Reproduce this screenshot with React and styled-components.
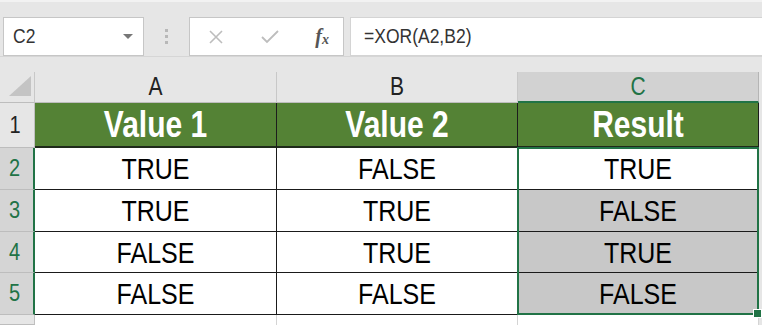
import React from 'react';
import styled, { createGlobalStyle } from 'styled-components';

const GlobalStyle = createGlobalStyle`
  body {
    margin: 0;
    background: #fff;
    font-family: "Liberation Sans", Arial, sans-serif;
  }
`;

const rows = [
  ['TRUE', 'FALSE', 'TRUE'],
  ['TRUE', 'TRUE', 'FALSE'],
  ['FALSE', 'TRUE', 'TRUE'],
  ['FALSE', 'FALSE', 'FALSE'],
];

const rowHeights = [42, 42, 41, 42];

function App() {
  return (
    <>
      <GlobalStyle />
      <Window>
        <TopStrip />
        <FormulaBar>
          <NameBox>
            <NameText>C2</NameText>
            <DropArrow />
          </NameBox>
          <Grip>
            <i /><i /><i />
          </Grip>
          <ButtonsBox>
            <svg width="16" height="16" viewBox="0 0 16 16">
              <path d="M2 2 L14 14 M14 2 L2 14" stroke="#bdbdbd" strokeWidth="1.6" fill="none" />
            </svg>
            <svg width="20" height="16" viewBox="0 0 20 16">
              <path d="M2 8 L7 13 L18 2" stroke="#bdbdbd" strokeWidth="1.8" fill="none" />
            </svg>
            <Fx>f<sub>x</sub></Fx>
          </ButtonsBox>
          <FormulaInput>
            <FormulaText>=XOR(A2,B2)</FormulaText>
          </FormulaInput>
        </FormulaBar>
        <Spacer />
        <SheetWrap>
          <Sheet>
            <Corner>
              <svg width="22" height="20" viewBox="0 0 22 20">
                <path d="M22 0 L22 20 L0 20 Z" fill="#c4c4c4" />
              </svg>
            </Corner>
            <ColHeader>
              <Stretch>A</Stretch>
            </ColHeader>
            <ColHeader>
              <Stretch>B</Stretch>
            </ColHeader>
            <ColHeader selected>
              <Stretch>C</Stretch>
            </ColHeader>

            <RowHeader $h={45}>
              <Stretch>1</Stretch>
            </RowHeader>
            <HeadCell>
              <Stretch>Value 1</Stretch>
            </HeadCell>
            <HeadCell>
              <Stretch>Value 2</Stretch>
            </HeadCell>
            <HeadCell>
              <Stretch>Result</Stretch>
            </HeadCell>

            {rows.map((row, idx) => (
              <React.Fragment key={idx}>
                <RowHeader $h={rowHeights[idx]} selected>
                  <Stretch>{idx + 2}</Stretch>
                </RowHeader>
                {row.map((val, c) => (
                  <Cell key={c} shaded={c === 2 && idx > 0}>
                    <Stretch>{val}</Stretch>
                  </Cell>
                ))}
              </React.Fragment>
            ))}

            <RowHeader $h={10} />
            <EmptyCell />
            <EmptyCell />
            <EmptyCell />
          </Sheet>
          <Selection>
            <Handle />
          </Selection>
        </SheetWrap>
      </Window>
    </>
  );
}

export default App;

const Window = styled.div`
  width: 762px;
  height: 325px;
  background: #e6e6e6;
  overflow: hidden;
`;

const TopStrip = styled.div`
  height: 15px;
  border-top: 2px solid #f2f2f2;
`;

const FormulaBar = styled.div`
  display: flex;
  align-items: stretch;
  height: 39px;
  padding-left: 3px;
`;

const NameBox = styled.div`
  width: 141px;
  display: flex;
  align-items: center;
  justify-content: space-between;
  background: #fff;
  border: 1px solid #c6c6c6;
  padding: 0 8px 0 8px;
  box-sizing: border-box;
`;

const NameText = styled.span`
  display: inline-block;
  font-size: 17.5px;
  color: #333;
  transform: scaleY(1.15);
  margin-left: 1px;
`;

const DropArrow = styled.span`
  width: 0;
  height: 0;
  border-left: 5px solid transparent;
  border-right: 5px solid transparent;
  border-top: 5px solid #777;
  margin-right: 2px;
`;

const Grip = styled.div`
  width: 45px;
  display: flex;
  flex-direction: column;
  align-items: center;
  justify-content: center;
  gap: 3px;
  i {
    display: block;
    width: 3px;
    height: 3px;
    background: #b8b8b8;
  }
`;

const ButtonsBox = styled.div`
  width: 155px;
  box-sizing: border-box;
  display: flex;
  align-items: center;
  justify-content: space-between;
  background: #fff;
  border: 1px solid #c6c6c6;
  padding: 0 14px 0 18px;
`;

const Fx = styled.span`
  font-family: "Liberation Serif", "Times New Roman", serif;
  font-style: italic;
  font-weight: bold;
  font-size: 20px;
  color: #555;
  sub {
    font-size: 14px;
    vertical-align: -1px;
  }
`;

const FormulaInput = styled.div`
  flex: 1;
  margin-left: 6px;
  display: flex;
  align-items: center;
  background: #fff;
  border: 1px solid #d4d4d4;
  border-right: none;
  padding-left: 13px;
`;

const FormulaText = styled.span`
  display: inline-block;
  font-size: 17.5px;
  color: #333;
  transform: scaleY(1.15);
`;

const Spacer = styled.div`
  height: 16px;
  border-top: 1px solid #d6d6d6;
  box-sizing: border-box;
`;

const SheetWrap = styled.div`
  position: relative;
  width: 759px;
`;

const Sheet = styled.div`
  display: grid;
  grid-template-columns: 35px 242px 241px 241px;
  grid-template-rows: 31px 45px 42px 42px 41px 42px 10px;
`;

const Stretch = styled.span`
  display: inline-block;
  transform: scaleY(1.2);
`;

const Corner = styled.div`
  display: flex;
  align-items: flex-end;
  justify-content: flex-end;
  padding: 0 3px 6px 0;
  border-right: 1px solid #c8c8c8;
  border-bottom: 1px solid #bdbdbd;
  box-sizing: border-box;
`;

const ColHeader = styled.div`
  display: flex;
  align-items: center;
  justify-content: center;
  font-size: 21px;
  color: ${p => (p.selected ? '#217346' : '#222')};
  background: ${p => (p.selected ? '#d2d2d2' : '#e6e6e6')};
  border-right: 1px solid ${p => (p.selected ? '#b5b5b5' : '#c8c8c8')};
  border-bottom: ${p => (p.selected ? '2px solid #217346' : '1px solid #bdbdbd')};
  box-sizing: border-box;
`;

const RowHeader = styled.div`
  display: flex;
  align-items: center;
  justify-content: center;
  padding-right: 4px;
  font-size: 20px;
  color: ${p => (p.selected ? '#217346' : '#222')};
  background: ${p => (p.selected ? '#d5d5d5' : '#e6e6e6')};
  border-right: ${p => (p.selected ? '2px solid #217346' : '1px solid #c0c0c0')};
  border-bottom: 1px solid #bdbdbd;
  box-sizing: border-box;
  overflow: hidden;
`;

const HeadCell = styled.div`
  display: flex;
  align-items: center;
  justify-content: center;
  background: #548235;
  color: #fff;
  font-weight: bold;
  font-size: 30px;
  border-right: 1px solid #1d1d1d;
  border-bottom: 2px solid #1f2a1a;
  box-sizing: border-box;
  padding-top: 1px;
`;

const Cell = styled.div`
  display: flex;
  align-items: center;
  justify-content: center;
  background: ${p => (p.shaded ? '#c8c8c8' : '#fff')};
  color: #000;
  font-size: 25px;
  border-right: 1px solid #1a1a1a;
  border-bottom: 1px solid #1a1a1a;
  box-sizing: border-box;
`;

const EmptyCell = styled.div`
  background: #fff;
  border-right: 1px solid #d4d4d4;
`;

const Selection = styled.div`
  position: absolute;
  left: 517px;
  top: 75px;
  width: 242px;
  height: 168px;
  border: 2px solid #217346;
  box-sizing: border-box;
  pointer-events: none;
`;

const Handle = styled.div`
  position: absolute;
  right: -5px;
  bottom: -5px;
  width: 7px;
  height: 7px;
  background: #217346;
  border: 1px solid #fff;
`;
